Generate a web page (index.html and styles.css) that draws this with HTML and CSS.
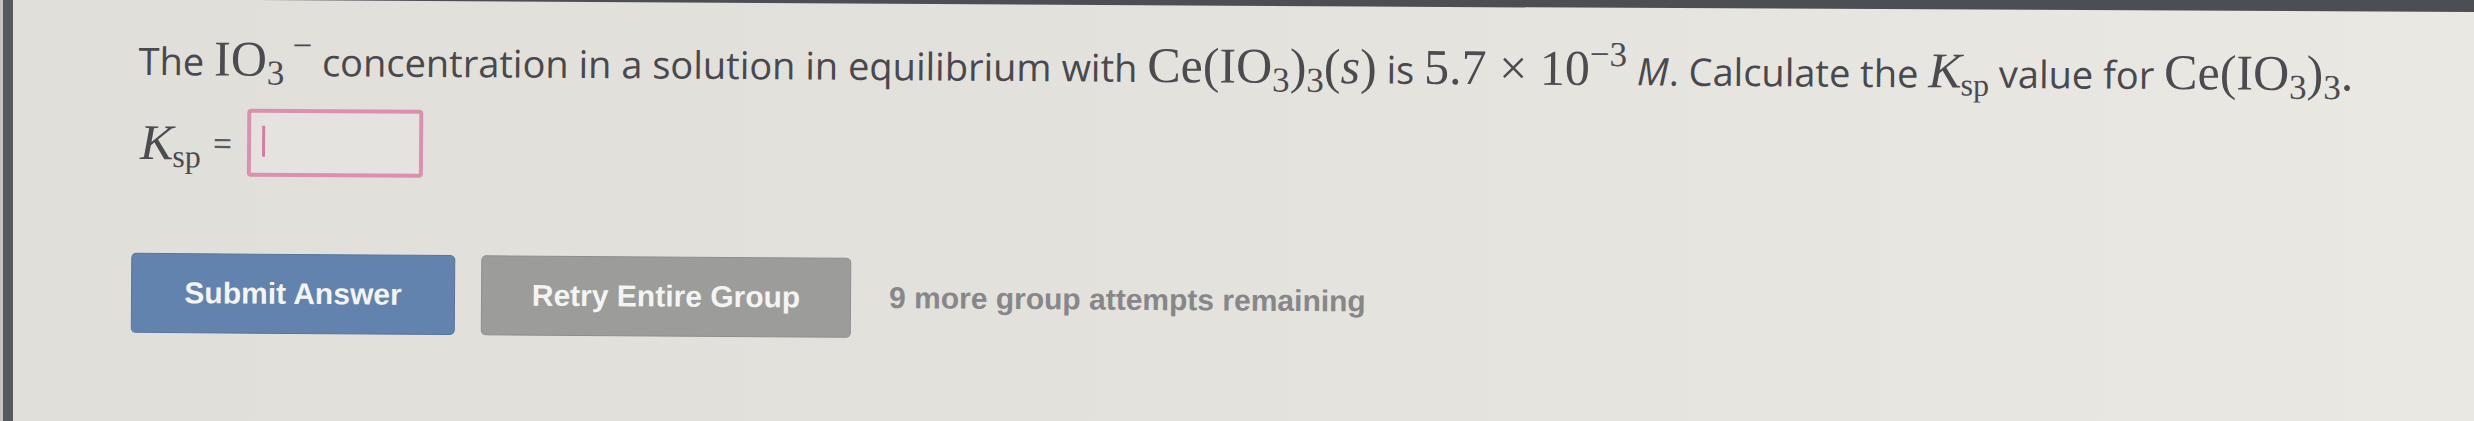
FILE: index.html
```html
<!DOCTYPE html>
<html lang="en">
<head>
<meta charset="utf-8">
<title>Ksp question</title>
<link rel="stylesheet" href="styles.css">
</head>
<body>
<div class="frame">
  <div class="screen">
    <div class="bezel"></div>
    <div class="content">
      <p class="question">The <span class="m">IO<sub>3</sub><sup class="charge">−</sup></span> concentration in a solution in equilibrium with <span class="m">Ce(IO<sub>3</sub>)<sub>3</sub>(<i>s</i>)</span> is <span class="m">5.7 × 10<sup>−3</sup></span> <i class="unit">M</i>. Calculate the <span class="m"><i>K</i><sub class="k-sub">sp</sub></span> value for <span class="m">Ce(IO<sub>3</sub>)<sub>3</sub>.</span></p>
      <div class="answer-row">
        <span class="m ksp"><i>K</i><sub class="k-sub">sp</sub></span>
        <span class="eq">=</span>
        <div class="answer-box"><span class="caret"></span></div>
      </div>
      <div class="actions">
        <button class="btn btn-submit" type="button">Submit Answer</button>
        <button class="btn btn-retry" type="button">Retry Entire Group</button>
        <span class="remaining">9 more group attempts remaining</span>
      </div>
    </div>
  </div>
</div>
</body>
</html>
```
FILE: styles.css
```css
html, body {
  margin: 0;
  padding: 0;
}

body {
  width: 2474px;
  height: 421px;
  overflow: hidden;
  background: #c9c9c6;
}

.frame {
  height: 421px;
  padding-left: 3px;
  background: #c4c4c2;
}

.screen {
  height: 421px;
  border-left: 10px solid #55585d;
  background: linear-gradient(90deg, #e1dfda 0%, #e3e1dc 40%, #e7e6e1 80%, #e9e8e3 100%);
  display: flex;
  flex-direction: column;
}

.bezel {
  height: 12px;
  flex: none;
  background: #4b4e52;
  clip-path: polygon(10% 0, 100% 0, 100% 100%, 55% 55%);
}

.content {
  padding: 23px 0 0 126px;
  transform: rotate(0.4deg);
  transform-origin: 0 0;
}

.question {
  margin: 0;
  font-family: "Open Sans", "Liberation Sans", sans-serif;
  font-size: 38px;
  line-height: 48px;
  color: #48484d;
  white-space: nowrap;
}

.m {
  font-family: "Liberation Serif", serif;
  font-size: 50px;
  line-height: 40px;
  color: #4b4b50;
}

.m i {
  font-style: italic;
}

.m sub {
  font-size: 70%;
  line-height: 0;
  vertical-align: -0.25em;
}

.m sub.k-sub {
  font-size: 64%;
  margin-left: -1px;
}

.m sup {
  font-size: 70%;
  line-height: 0;
  vertical-align: 0.55em;
}

.m sup.charge {
  margin-left: 8px;
}

.unit {
  font-style: italic;
}

.answer-row {
  margin-top: 24px;
  display: flex;
  align-items: center;
  height: 68px;
}

.ksp {
  font-size: 50px;
  line-height: 68px;
  margin-left: 2px;
}

.eq {
  font-family: "Open Sans", sans-serif;
  font-size: 34px;
  color: #5a5a5e;
  margin-left: 12px;
  margin-right: 15px;
}

.answer-box {
  box-sizing: border-box;
  width: 176px;
  height: 68px;
  border: 4px solid #dc90ae;
  border-radius: 4px;
  background: #e5e3df;
  display: flex;
  align-items: center;
  padding-left: 11px;
}

.caret {
  width: 3px;
  height: 31px;
  background: #d57ea0;
  margin-top: -4px;
}

.actions {
  margin-top: 77px;
  margin-left: -6px;
  display: flex;
  align-items: center;
}

.btn {
  box-sizing: border-box;
  height: 80px;
  padding: 0;
  border-radius: 5px;
  font-family: "Liberation Sans", Arial, sans-serif;
  font-weight: bold;
  font-size: 30px;
  color: #f4f4f2;
  white-space: nowrap;
  text-align: center;
  cursor: pointer;
}

.btn-submit {
  width: 324px;
  background: #6183ad;
  border: 1px solid #56759c;
}

.btn-retry {
  width: 370px;
  margin-left: 26px;
  background: #9c9c9a;
  border: 1px solid #8e8e8c;
}

.remaining {
  margin-left: 38px;
  font-family: "Liberation Sans", Arial, sans-serif;
  font-weight: bold;
  font-size: 30px;
  color: #87878a;
}
```
